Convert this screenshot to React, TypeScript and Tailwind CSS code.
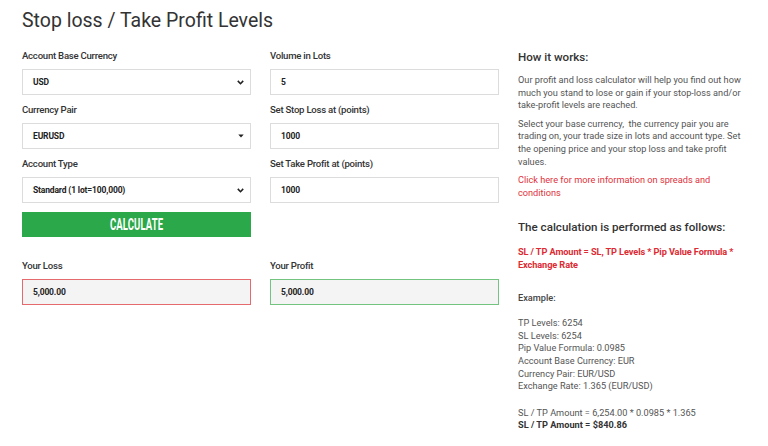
import React from "react";

const Chevron = () => (
  <svg width="7" height="5" viewBox="0 0 7 5" className="shrink-0">
    <path d="M0.8 0.9 L3.5 3.7 L6.2 0.9" fill="none" stroke="#222" strokeWidth="1.6" />
  </svg>
);
const Tri = () => (
  <svg width="6" height="4" viewBox="0 0 6 4" className="shrink-0">
    <path d="M0.3 0.5 L5.7 0.5 L3 3.6 Z" fill="#222" />
  </svg>
);

const Label = ({ children }: { children: React.ReactNode }) => (
  <div className="h-[14px] mb-[7px] text-[9.6px] leading-[16px] font-medium text-[#333] tracking-[-0.25px]">{children}</div>
);

const Box = ({ children, icon, cls = "border-[#dcdcdc] bg-white" }: { children: React.ReactNode; icon?: React.ReactNode; cls?: string }) => (
  <div className={`h-[26px] border ${cls} flex items-center justify-between pl-[10px] pr-[6px] text-[8.5px] font-bold text-[#222] tracking-[-0.15px]`}>
    <span>{children}</span>
    {icon}
  </div>
);

export default function App() {
  return (
    <div className="w-[768px] h-[446px] bg-white overflow-hidden pl-[22px] pt-[8px]" style={{ fontFamily: "Roboto, 'Liberation Sans', sans-serif" }}>
      <h1 className="text-[19.5px] leading-[26px] text-[#333] font-normal">Stop loss / Take Profit Levels</h1>
      <div className="flex mt-[14px]">
        <div className="w-[477px] shrink-0 grid grid-cols-[229px_229px] gap-x-[19px] content-start">
          <div>
            <Label>Account Base Currency</Label>
            <Box icon={<Chevron />}>USD</Box>
          </div>
          <div>
            <Label>Volume in Lots</Label>
            <Box>5</Box>
          </div>
          <div className="mt-[7px]">
            <Label>Currency Pair</Label>
            <Box icon={<Tri />}>EURUSD</Box>
          </div>
          <div className="mt-[7px]">
            <Label>Set Stop Loss at (points)</Label>
            <Box>1000</Box>
          </div>
          <div className="mt-[7px]">
            <Label>Account Type</Label>
            <Box icon={<Chevron />}>Standard (1 lot=100,000)</Box>
          </div>
          <div className="mt-[7px]">
            <Label>Set Take Profit at (points)</Label>
            <Box>1000</Box>
          </div>
          <div className="mt-[9px]">
            <div className="h-[25px] bg-[#2ba84a] flex items-center justify-center">
              <span className="inline-block text-white font-bold text-[17px] leading-[17px] scale-x-[0.56] tracking-[0.2px]">CALCULATE</span>
            </div>
          </div>
          <div />
          <div className="mt-[21px]">
            <Label>Your Loss</Label>
            <Box cls="border-[#e56a6d] bg-[#f4f4f4]">5,000.00</Box>
          </div>
          <div className="mt-[21px]">
            <Label>Your Profit</Label>
            <Box cls="border-[#72c47f] bg-[#f4f4f4]">5,000.00</Box>
          </div>
        </div>
        <div className="ml-[19px] w-[230px] shrink-0 text-[9.2px] leading-[12.6px] text-[#555] mt-[1px]">
          <h2 className="text-[11.6px] leading-[16px] text-[#333] font-medium">How it works:</h2>
          <p className="mt-[9px]">Our profit and loss calculator will help you find out how much you stand to lose or gain if your stop-loss and/or take-profit levels are reached.</p>
          <p className="mt-[6px]">Select your base currency,&nbsp; the currency pair you are trading on, your trade size in lots and account type. Set the opening price and your stop loss and take profit values.</p>
          <p className="mt-[6px] text-[#e0323c]">Click here for more information on spreads and conditions</p>
          <h2 className="mt-[20px] text-[11.6px] leading-[16px] text-[#333] font-medium">The calculation is performed as follows:</h2>
          <p className="mt-[11px] text-[#dc2b34] font-bold tracking-[-0.1px]">SL / TP Amount = SL, TP Levels * Pip Value Formula * Exchange Rate</p>
          <p className="mt-[20px] font-medium text-[#444]">Example:</p>
          <div className="mt-[13px]">
            <div>TP Levels: 6254</div>
            <div>SL Levels: 6254</div>
            <div>Pip Value Formula: 0.0985</div>
            <div>Account Base Currency: EUR</div>
            <div>Currency Pair: EUR/USD</div>
            <div>Exchange Rate: 1.365 (EUR/USD)</div>
          </div>
          <div className="mt-[14px]">SL / TP Amount = 6,254.00 * 0.0985 * 1.365</div>
          <div className="font-bold text-[#333]">SL / TP Amount = $840.86</div>
        </div>
      </div>
    </div>
  );
}
